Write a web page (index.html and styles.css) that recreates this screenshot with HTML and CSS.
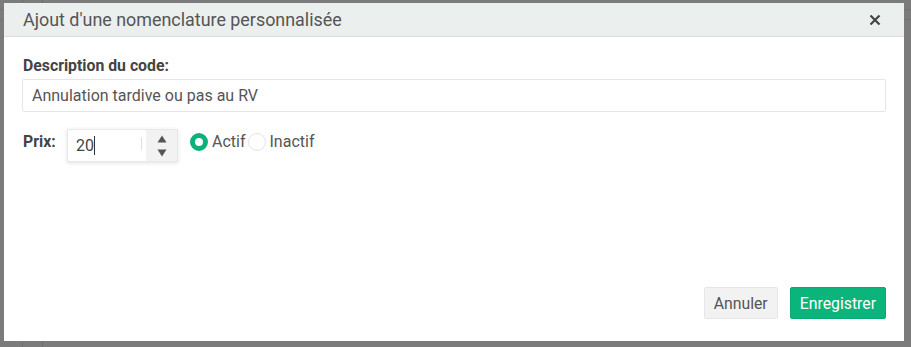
FILE: index.html
```html
<!DOCTYPE html>
<html lang="fr">
<head>
<meta charset="utf-8">
<title>Ajout d'une nomenclature personnalisée</title>
<link rel="stylesheet" href="styles.css">
</head>
<body>
<div class="backdrop">
  <div class="modal">
    <div class="modal-header">
      <h4 class="modal-title">Ajout d'une nomenclature personnalisée</h4>
      <span class="close">
        <svg width="12" height="12" viewBox="0 0 12 12"><path d="M1.5 1.5 L10.5 10.5 M10.5 1.5 L1.5 10.5" stroke="#444" stroke-width="2.2" stroke-linecap="butt"/></svg>
      </span>
    </div>
    <div class="modal-body">
      <label class="label">Description du code:</label>
      <div class="text-input">Annulation tardive ou pas au RV</div>
      <div class="price-row">
        <label class="label price-label">Prix:</label>
        <div class="number-input">
          <div class="number-value"><span>20</span><span class="caret"></span><span class="ibeam"></span></div>
          <div class="spinner">
            <svg width="10" height="8" viewBox="0 0 10 8"><path d="M5 0.5 L9.5 7.5 L0.5 7.5 Z" fill="#555"/></svg>
            <svg width="10" height="8" viewBox="0 0 10 8"><path d="M0.5 0.5 L9.5 0.5 L5 7.5 Z" fill="#555"/></svg>
          </div>
        </div>
        <div class="radio-group">
          <span class="radio checked"></span><span class="radio-text">Actif</span>
          <span class="radio"></span><span class="radio-text">Inactif</span>
        </div>
      </div>
    </div>
    <div class="modal-footer">
      <button class="btn btn-default">Annuler</button>
      <button class="btn btn-primary">Enregistrer</button>
    </div>
  </div>
</div>
</body>
</html>
```
FILE: styles.css
```css
* { box-sizing: border-box; }
html, body {
  margin: 0;
  padding: 0;
  width: 911px;
  height: 347px;
  overflow: hidden;
  background: #7b7b7b;
  font-family: Roboto, "Liberation Sans", sans-serif;
}
.backdrop {
  width: 911px;
  height: 347px;
  padding: 3px 0 0 4px;
  background:
    linear-gradient(#6f6f6f, #6f6f6f) 22px 0 / 1px 100% no-repeat,
    linear-gradient(#6f6f6f, #6f6f6f) 42px 0 / 1px 100% no-repeat,
    linear-gradient(#727272, #727272) 0 9px / 100% 1px no-repeat,
    linear-gradient(#727272, #727272) 0 19px / 100% 1px no-repeat,
    #7b7b7b;
}
.modal {
  width: 900px;
  height: 338px;
  background: #fff;
  display: flex;
  flex-direction: column;
}
.modal-header {
  height: 34px;
  background: #ebefee;
  border-bottom: 1px solid #dcdcdc;
  display: flex;
  align-items: center;
  justify-content: space-between;
  padding: 0 23px 0 19px;
}
.modal-title {
  margin: 0;
  font-size: 17.9px;
  font-weight: 400;
  color: #555;
}
.close {
  display: flex;
  align-items: center;
  padding-top: 1px;
}
.modal-body {
  flex: 1;
  padding: 20px 18px 0 18px;
  display: flex;
  flex-direction: column;
}
.label {
  font-size: 15.8px;
  font-weight: 700;
  color: #444;
  line-height: 18px;
  margin-left: 1px;
}
.text-input {
  margin-top: 4px;
  height: 33px;
  border: 1px solid #e6e6e6;
  border-radius: 2px;
  padding: 0 9px;
  font-size: 16px;
  color: #555;
  display: flex;
  align-items: center;
}
.price-row {
  margin-top: 18px;
  display: flex;
  align-items: flex-start;
}
.price-label {
  margin-top: 3px;
  width: 44px;
}
.number-input {
  width: 111px;
  height: 33px;
  margin-top: -1px;
  display: flex;
  border: 1px solid #e8e8e8;
  box-shadow: 0 1px 4px rgba(0,0,0,0.12);
  background: #fff;
}
.number-value {
  flex: 1;
  display: flex;
  align-items: center;
  padding-left: 8px;
  font-size: 16px;
  color: #444;
  position: relative;
}
.caret {
  width: 1px;
  height: 19px;
  background: #333;
}
.ibeam {
  position: absolute;
  left: 73px;
  top: 7px;
  width: 1px;
  height: 13px;
  background: #e0e0e0;
}
.spinner {
  width: 31px;
  background: #f2f2f2;
  display: flex;
  flex-direction: column;
  align-items: center;
  justify-content: center;
  gap: 6px;
}
.radio-group {
  display: flex;
  align-items: center;
  margin-left: 12px;
  margin-top: 2px;
}
.radio {
  width: 18px;
  height: 18px;
  border-radius: 50%;
  border: 1px solid #e3e3e3;
  background: #fff;
}
.radio.checked {
  border: 5px solid #0cb07a;
}
.radio-text {
  font-size: 16px;
  color: #555;
  margin-left: 4px;
  margin-right: 2px;
}
.modal-footer {
  display: flex;
  justify-content: flex-end;
  gap: 12px;
  padding: 0 18px 22px 0;
}
.btn {
  height: 32px;
  font-family: Roboto, "Liberation Sans", sans-serif;
  font-size: 15.8px;
  border-radius: 2px;
  padding: 0 9px;
  cursor: pointer;
}
.btn-default {
  background: #f2f2f2;
  border: 1px solid #e6e6e6;
  color: #555;
}
.btn-primary {
  background: #0bb47b;
  border: 1px solid #0aa872;
  color: #fff;
}
```
